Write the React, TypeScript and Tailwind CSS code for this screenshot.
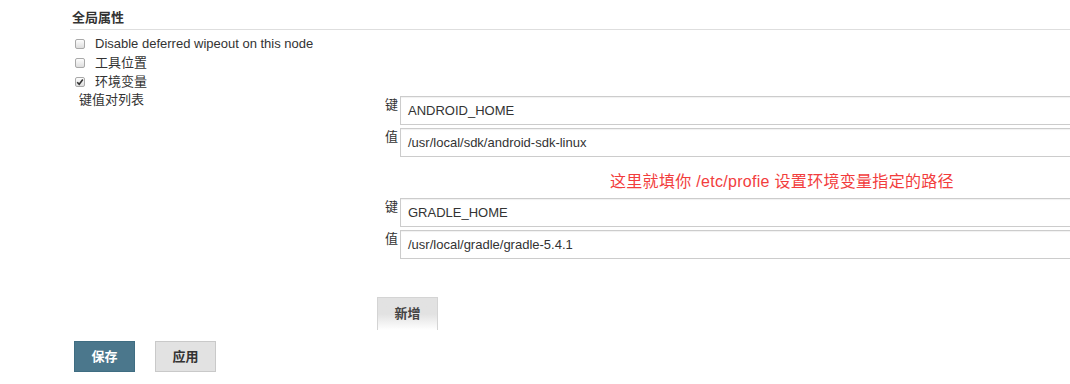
import React from "react";

const FONT = { fontFamily: '"Liberation Sans", "Noto Sans CJK SC", sans-serif' };

function Check({ checked }: { checked?: boolean }) {
  return (
    <span className="relative inline-flex h-[10px] w-[10px] shrink-0 items-center justify-center rounded-[2px] border border-[#a9a9a9] bg-gradient-to-b from-[#fdfdfd] to-[#dedede]">
      {checked && (
        <svg width="8" height="8" viewBox="0 0 8 8" className="absolute">
          <path d="M1.2 4.2 L3.2 6.2 L6.8 1.6" fill="none" stroke="#333" strokeWidth="1.6" />
        </svg>
      )}
    </span>
  );
}

function Field({ label, value }: { label: string; value: string }) {
  return (
    <div className="flex">
      <div className="w-[15px] shrink-0 pt-[1px] text-[13px] leading-[16px] text-[#333]">{label}</div>
      <div className="flex h-[29px] w-[700px] shrink-0 items-center border border-[#cccccc] bg-white pl-[7px] text-[13px] text-[#333] shadow-[inset_0_1px_1px_rgba(0,0,0,0.06)]">
        {value}
      </div>
    </div>
  );
}

export default function App() {
  return (
    <div className="relative h-[384px] w-[1070px] overflow-hidden bg-white" style={FONT}>
      <div className="pt-[10px]">
        <div className="ml-[70px] border-b border-[#dedede] pb-[3px] pl-[2px] text-[13px] font-bold leading-[16px] text-[#333]">
          全局属性
        </div>
        <div className="ml-[75px] mt-[4px] flex flex-col">
          <div className="flex h-[19px] items-center gap-[10px] text-[13px] text-[#333]">
            <Check />
            <span>Disable deferred wipeout on this node</span>
          </div>
          <div className="flex h-[19px] items-center gap-[10px] text-[13px] text-[#333]">
            <Check />
            <span>工具位置</span>
          </div>
          <div className="flex h-[19px] items-center gap-[10px] text-[13px] text-[#333]">
            <Check checked />
            <span>环境变量</span>
          </div>
        </div>
        <div className="flex">
          <div className="w-[385px] shrink-0 pl-[79px] pt-[1px] text-[13px] leading-[16px] text-[#333]">键值对列表</div>
          <div className="flex shrink-0 flex-col pt-[5px]">
            <div className="flex flex-col gap-[3px]">
              <Field label="键" value="ANDROID_HOME" />
              <Field label="值" value="/usr/local/sdk/android-sdk-linux" />
            </div>
            <div className="flex h-[41px] items-center pl-[225px] pt-[8px] text-[16px] tracking-[0.3px] text-[#f23d3d]">
              这里就填你 /etc/profie 设置环境变量指定的路径
            </div>
            <div className="flex flex-col gap-[3px]">
              <Field label="键" value="GRADLE_HOME" />
              <Field label="值" value="/usr/local/gradle/gradle-5.4.1" />
            </div>
            <div className="mt-[38px]">
              <div className="-ml-[8px] flex h-[33px] w-[61px] items-center justify-center border-x border-t border-[#d4d4d4] bg-gradient-to-b from-[#e2e2e2] from-50% to-white text-[13px] font-bold text-[#444]">
                新增
              </div>
            </div>
          </div>
        </div>
        <div className="mt-[11px] flex gap-[20px] pl-[74px]">
          <div className="flex h-[31px] w-[61px] items-center justify-center border border-[#3f6d82] bg-[#4b778c] text-[13px] font-bold text-white">
            保存
          </div>
          <div className="flex h-[31px] w-[61px] items-center justify-center border border-[#c9c9c9] bg-[#e2e2e2] text-[13px] font-bold text-[#333]">
            应用
          </div>
        </div>
      </div>
    </div>
  );
}
